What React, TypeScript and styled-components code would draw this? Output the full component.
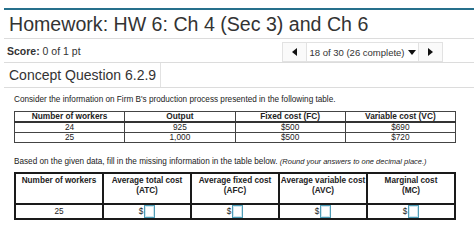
import React from "react"
import styled, { createGlobalStyle } from "styled-components"

const GlobalStyle = createGlobalStyle`
    body {
        margin: 0;
        background: #fff;
        font-family: "Liberation Sans", Arial, sans-serif;
        color: #222;
    }
`
const Page = styled.div`
    width: 474px;
    height: 242px;
    overflow: hidden;
    padding: 8px 0 0 4px;
    box-sizing: border-box;
`
const TopBar = styled.div`
    height: 2px;
    background: #26708c;
`
const TitleRow = styled.div`
    height: 29px;
    box-sizing: border-box;
    border-bottom: 1px solid #dcdcdc;
    padding-left: 5px;
    font-size: 19.6px;
    line-height: 28px;
    color: #333;
`
const ScoreRow = styled.div`
    height: 24px;
    box-sizing: border-box;
    border-bottom: 1px solid #dcdcdc;
    display: flex;
    align-items: center;
    justify-content: space-between;
    padding: 0 31px 0 3px;
    font-size: 10.5px;
    color: #333;
    > .score b {
        font-weight: bold;
    }
`
const Pager = styled.div`
    display: flex;
    height: 18px;
    margin-top: 3px;
    border: 1px solid #e2e2e2;
    background: #fafafa;
    font-size: 9.5px;
    color: #333;
`
const PagerCell = styled.div<{ wide?: boolean }>`
    display: flex;
    align-items: center;
    justify-content: center;
    width: ${(p) => (p.wide ? "111px" : "23px")};
    border-left: ${(p) => (p.wide ? "1px solid #e2e2e2" : "none")};
    border-right: ${(p) => (p.wide ? "1px solid #e2e2e2" : "none")};
    background: ${(p) => (p.wide ? "#fff" : "#fafafa")};
    gap: 3px;
`
const Arrow = styled.span<{ dir: "left" | "right" | "down" }>`
    width: 0;
    height: 0;
    border-style: solid;
    ${(p) =>
        p.dir === "left"
            ? "border-width: 4px 5px 4px 0; border-color: transparent #111 transparent transparent;"
            : p.dir === "right"
            ? "border-width: 4px 0 4px 5px; border-color: transparent transparent transparent #111;"
            : "border-width: 5px 4px 0 4px; border-color: #111 transparent transparent transparent;"}
`
const ConceptRow = styled.div`
    height: 25px;
    box-sizing: border-box;
    border-bottom: 1px solid #dcdcdc;
    display: flex;
`
const ConceptTitle = styled.div`
    padding: 0 4px 0 5px;
    border-right: 1px solid #e2e2e2;
    font-size: 14px;
    line-height: 24px;
    color: #333;
`
const Body = styled.div`
    padding: 7px 0 0 10px;
    font-size: 8.2px;
    color: #222;
`
const Prompt = styled.p<{ gap?: number }>`
    margin: 0 0 ${(p) => p.gap ?? 6}px 0;
    line-height: 10px;
    > i {
        font-style: italic;
        font-size: 7.5px;
    }
`
const DataTable = styled.table`
    width: 442px;
    border-collapse: collapse;
    table-layout: fixed;
    margin-bottom: 14px;
    font-size: 8.3px;
    th,
    td {
        border: 1px solid #444;
        text-align: center;
        padding: 0;
        height: 9px;
        line-height: 9px;
    }
    th {
        font-weight: bold;
        border-bottom: 2px solid #333;
    }
`
const AnswerTable = styled.table`
    width: 442px;
    border-collapse: collapse;
    table-layout: fixed;
    font-size: 8.2px;
    th,
    td {
        border: 2px solid #1a1a1a;
        text-align: center;
        padding: 0;
    }
    th {
        height: 31px;
        vertical-align: top;
        font-weight: bold;
        line-height: 10px;
        padding-top: 2px;
        box-sizing: border-box;
        white-space: nowrap;
    }
    td {
        height: 12px;
        line-height: 12px;
    }
`
const Money = styled.span`
    display: inline-flex;
    align-items: center;
    gap: 1px;
`
const AnswerBox = styled.span`
    display: inline-block;
    width: 9px;
    height: 11px;
    border: 1px solid #4f9db6;
    box-shadow: inset 0 0 0 1px #cfe6ee;
    background: #fff;
`

const given = [
    { workers: 24, output: "925", fc: "$500", vc: "$690" },
    { workers: 25, output: "1,000", fc: "$500", vc: "$720" },
]
const answerCols = [
    ["Average total cost", "(ATC)"],
    ["Average fixed cost", "(AFC)"],
    ["Average variable cost", "(AVC)"],
    ["Marginal cost", "(MC)"],
]

const App = () => {
    return (
        <Page>
            <GlobalStyle />
            <TopBar />
            <TitleRow>Homework: HW 6: Ch 4 (Sec 3) and Ch 6</TitleRow>
            <ScoreRow>
                <div className="score">
                    <b>Score:</b> 0 of 1 pt
                </div>
                <Pager>
                    <PagerCell>
                        <Arrow dir="left" />
                    </PagerCell>
                    <PagerCell wide>
                        18 of 30 (26 complete) <Arrow dir="down" />
                    </PagerCell>
                    <PagerCell>
                        <Arrow dir="right" />
                    </PagerCell>
                </Pager>
            </ScoreRow>
            <ConceptRow>
                <ConceptTitle>Concept Question 6.2.9</ConceptTitle>
            </ConceptRow>
            <Body>
                <Prompt>Consider the information on Firm B's production process presented in the following table.</Prompt>
                <DataTable>
                    <thead>
                        <tr>
                            <th>Number of workers</th>
                            <th>Output</th>
                            <th>Fixed cost (FC)</th>
                            <th>Variable cost (VC)</th>
                        </tr>
                    </thead>
                    <tbody>
                        {given.map((r) => (
                            <tr key={r.workers}>
                                <td>{r.workers}</td>
                                <td>{r.output}</td>
                                <td>{r.fc}</td>
                                <td>{r.vc}</td>
                            </tr>
                        ))}
                    </tbody>
                </DataTable>
                <Prompt gap={5}>
                    Based on the given data, fill in the missing information in the table below.{" "}
                    <i>(Round your answers to one decimal place.)</i>
                </Prompt>
                <AnswerTable>
                    <thead>
                        <tr>
                            <th>Number of workers</th>
                            {answerCols.map(([a, b]) => (
                                <th key={a}>
                                    {a}
                                    <br />
                                    {b}
                                </th>
                            ))}
                        </tr>
                    </thead>
                    <tbody>
                        <tr>
                            <td>25</td>
                            {answerCols.map(([a]) => (
                                <td key={a}>
                                    <Money>
                                        $<AnswerBox />
                                    </Money>
                                </td>
                            ))}
                        </tr>
                    </tbody>
                </AnswerTable>
            </Body>
        </Page>
    )
}
export default App
